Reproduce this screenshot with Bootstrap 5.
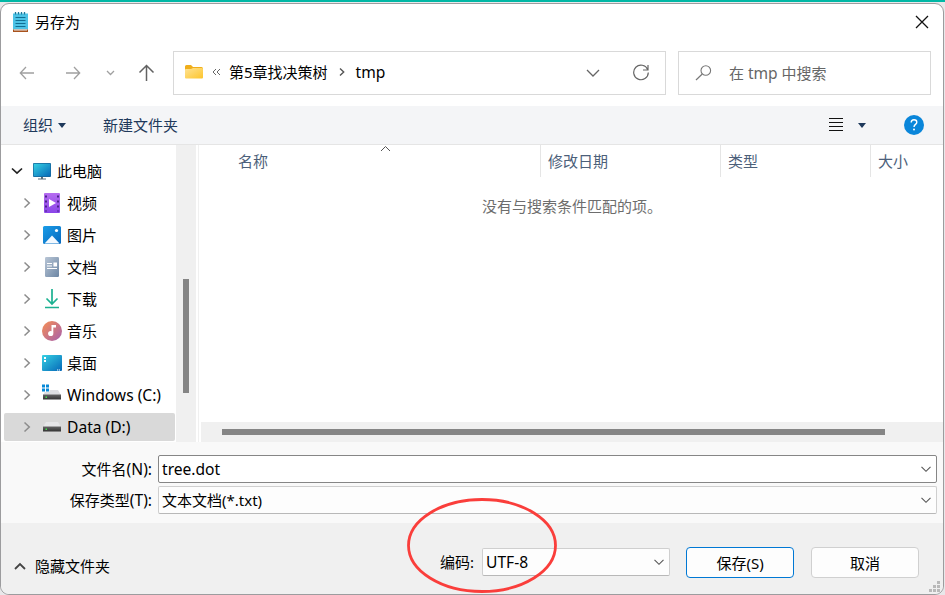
<!DOCTYPE html>
<html lang="zh-CN">
<head>
<meta charset="utf-8">
<meta name="viewport" content="width=device-width, initial-scale=1">
<title>另存为</title>
<link href="https://cdn.jsdelivr.net/npm/bootstrap@5.3.0/dist/css/bootstrap.min.css" rel="stylesheet">
<style>
body{width:945px;height:595px;background:#e8e8ea;border-top:2px solid #00b7a5;font:15px/20px "Noto Sans","Noto Sans CJK SC",sans-serif;color:#000}
svg{display:block;flex:none}
.latin{font-size:15.6px}
.dialog{width:944px;height:592px;margin-top:1px;border:1px solid #9c9c9e;border-radius:9px;background:#fff}
.titlebar{height:47px;padding:0 14px 11px 10px}
.app-name{margin-left:6px}
.addressbar{height:44px;padding-right:11px}
.arrows{width:172px;height:44px;padding-left:18px}
.arrows .forward{margin-left:30px}
.arrows .recent{margin-left:25px}
.arrows .up{margin-left:23px}
.address{width:493px;border:1px solid #d9d9d9;padding:0 15px 2px 10px}
.crumb{margin-left:8px}
.search{width:253px;margin-left:12px;border:1px solid #d9d9d9;padding-left:16px;color:#666}
.search span{margin-left:17px}
.toolbar{height:39px;margin-top:11px;background:#f4f5f7;border-bottom:1px solid #e5e5e5;padding:0 19px 0 22px;color:#1e395b}
.new-folder{margin-left:37px}
.caret{width:0;border:4px solid transparent;border-top:5px solid #1e395b;border-bottom:0}
.toolbar span+.caret{margin-left:5px}
.toolbar svg+.caret{margin-left:14px}
.help{margin-left:38px}
.browser{height:297px}
.tree{width:175px;padding:12px 0 0 3px}
.tree-item{height:28px;margin-bottom:4px;border-radius:2px;padding-left:17px;width:171px;white-space:nowrap}
.tree-item.root{padding-left:7px}
.tree-item.selected{background:#d9d9d9}
.tree-icon{width:24px;height:24px;margin:0 3px 0 7px}
.root .tree-icon{margin:0 3px 0 7px}
.vtrack{width:20px;background:#f0f0f0;padding:134px 7px 0 7px}
.vthumb{width:6px;height:114px;background:#858585}
.files{border-left:1px solid #f0f0f0;margin-left:2px}
.heads{height:32px;color:#4c607a}
.heads>div{padding:6px 0 0 7px;border-left:1px solid #e5e5e5}
.heads .name{width:341px;padding-left:39px;border:0}
.sorter{left:181px;top:0}
.date{width:180px}.kind{width:150px}
.empty{color:#6d6d6d;margin-top:19px;padding-left:2px}
.htrack{height:20px;background:#f0f0f0;margin-left:2px;padding:7px 0 0 21px}
.hthumb{width:663px;height:6px;background:#858585}
.fields{height:81px;background:#f9f9f9;padding:13px 6px 0 0}
.fields label{width:151px;text-align:right;white-space:nowrap}
.fields .picker{margin-left:6px}
.picker{height:28px;border:1px solid #cfcfcf;border-bottom-color:#b8b8b8;border-radius:2px;background:#fdfdfd;padding:0 4px 0 3px}
.picker.active-field{border-color:#868686;background:#fff;padding-bottom:1px}
.actions{height:71px;background:#f0f0f0;padding:24px 23px 0 13px;border-radius:0 0 8px 8px}
.hide-link{padding-top:9px;width:426px}
.hide-link span{margin-left:9px}
.encoding-label{margin-top:5px}
.encoding{width:188px;margin:1px 16px 0 8px}
.dlg-btn{width:108px;height:31px;padding:0;font-size:15px;line-height:20px;background:#fdfdfd;border:1px solid #d0d0d0;border-radius:4px;color:#000}
.dlg-btn.default{border-color:#0078d4;margin-right:17px}
.ring{left:406px;top:496px;pointer-events:none}
.grip{right:2px;bottom:1px}
</style>
<script src="https://cdn.jsdelivr.net/npm/bootstrap@5.3.0/dist/js/bootstrap.bundle.min.js"></script>
</head>
<body class="overflow-hidden position-relative">
<svg width="0" height="0" class="position-absolute"><defs>
<linearGradient id="blue" x2="1" y2="1"><stop stop-color="#36d1e3"/><stop offset="1" stop-color="#0668b8"/></linearGradient>
<linearGradient id="sky" x2="1" y2="1"><stop stop-color="#1a9de8"/><stop offset="1" stop-color="#0869be"/></linearGradient>
<linearGradient id="violet" x2="0" y2="1"><stop stop-color="#b66cf0"/><stop offset="1" stop-color="#8a45e8"/></linearGradient>
<linearGradient id="steel" x2="1" y2="1"><stop stop-color="#b9c6d6"/><stop offset="1" stop-color="#6c86a4"/></linearGradient>
<linearGradient id="sunset" x2="1" y2="1"><stop offset=".1" stop-color="#ef8a5c"/><stop offset="1" stop-color="#a55fae"/></linearGradient>
<linearGradient id="gold" x2="1" y2="1"><stop stop-color="#ffe394"/><stop offset="1" stop-color="#fdc52c"/></linearGradient>
<linearGradient id="disk" x2="0" y2="1"><stop stop-color="#666"/><stop offset="1" stop-color="#333"/></linearGradient>
<symbol id="right" viewBox="0 0 12 12"><path d="M3.500 1.500 8.300 6 3.500 10.500" fill="none" stroke="#8c8c8c" stroke-width="1.500"/></symbol>
<symbol id="down" viewBox="0 0 12 8"><path d="M1.500 1.800 6 6.300 10.500 1.800" fill="none" stroke="#555" stroke-width="1.100"/></symbol>
</defs></svg>

<main class="dialog overflow-hidden position-relative">
  <header class="titlebar d-flex align-items-center">
    <svg width="18" height="22" viewBox="0 0 18 22"><path d="M2 2.500h15v16H2z" fill="#4dc3e6"/><path d="M2 18.500h15V21H2z" fill="#a9521c"/><path d="M3 18.500h13v1H3z" fill="#e7eef2"/><path d="M4.500 1v2.500M7.500 1v2.500M10.500 1v2.500M13.500 1v2.500" stroke="#18799c" stroke-width="1.300"/><path d="M4.500 6.500h10M4.500 9.500h10M4.500 12.500h10M4.500 15.500h10" stroke="#126f93" stroke-width="1.100"/></svg>
    <span class="app-name">另存为</span>
    <svg class="ms-auto" width="14" height="14" viewBox="0 0 14 14"><path d="m1 1 12 12M13 1 1 13" stroke="#111" stroke-width="1.300"/></svg>
  </header>

  <nav class="addressbar d-flex">
    <div class="arrows d-flex align-items-center">
      <svg width="16" height="14" viewBox="0 0 16 14"><path d="M15 7H1.500M7 1 1.300 7 7 13" fill="none" stroke="#a0a0a0" stroke-width="1.300"/></svg>
      <svg class="forward" width="16" height="14" viewBox="0 0 16 14"><path d="M1 7h13.500M9 1l5.700 6L9 13" fill="none" stroke="#a0a0a0" stroke-width="1.300"/></svg>
      <svg class="recent" width="9" height="7" viewBox="0 0 9 7"><path d="m1 1 3.500 3.500L8 1" fill="none" stroke="#a0a0a0" stroke-width="1.300"/></svg>
      <svg class="up" width="17" height="18" viewBox="0 0 17 18"><path d="M8.500 17V1.500M1.500 8.500l7-7 7 7" fill="none" stroke="#626262" stroke-width="1.500"/></svg>
    </div>
    <div class="address d-flex align-items-center">
      <svg width="20" height="16" viewBox="0 0 20 16"><path d="M1 2.500Q1 1 2.500 1H7l2 2h8.500Q19 3 19 4.500V9H1z" fill="#f0ae1a"/><path d="M1 6q0-1 1-1h5l2-1h9q1 0 1 1v8.500q0 1-1 1H2q-1 0-1-1z" fill="url(#gold)"/></svg>
      <svg class="ms-2" width="9" height="8" viewBox="0 0 9 8"><path d="M4 1 1 4l3 3M8 1 5 4l3 3" fill="none" stroke="#666"/></svg>
      <span class="crumb">第5章找决策树</span>
      <svg class="ms-2" width="12" height="12" viewBox="0 0 12 12"><path d="M4 2.500 7.700 6 4 9.500" fill="none" stroke="#555" stroke-width="1.400"/></svg>
      <span class="crumb latin">tmp</span>
      <svg class="ms-auto me-4" width="14" height="9" viewBox="0 0 14 9"><path d="m1 2 6 6 6-6" fill="none" stroke="#666" stroke-width="1.300"/></svg>
      <svg class="ms-2" width="18" height="18" viewBox="0 0 18 18"><path d="M15.700 6.500A7.300 7.300 0 1 0 16.300 9.500M16 2v5h-5" fill="none" stroke="#666" stroke-width="1.200"/></svg>
    </div>
    <div class="search d-flex align-items-center">
      <svg width="17" height="17" viewBox="0 0 17 17"><circle cx="10.800" cy="5.500" r="4.800" fill="none" stroke="#777" stroke-width="1.100"/><path d="M7.300 9 1 15" stroke="#777" stroke-width="1.200"/></svg>
      <span>在 <span class="latin m-0">tmp</span> 中搜索</span>
    </div>
  </nav>

  <section class="toolbar d-flex align-items-center">
    <span>组织</span><i class="caret"></i>
    <span class="new-folder">新建文件夹</span>
    <svg class="ms-auto" width="16" height="14" viewBox="0 0 16 14"><path d="M1 .5h14M1 4.500h14M1 8.500h14M1 12.500h14" stroke="#111"/></svg>
    <i class="caret"></i>
    <svg class="help" width="20" height="20" viewBox="0 0 20 20"><circle cx="10" cy="10" r="10" fill="#0a86da"/><path d="M7.200 7.500Q7.200 4.700 10 4.700T12.800 7.200C12.800 9.500 10 9.200 10 12" fill="none" stroke="#fff" stroke-width="1.400"/><circle cx="10" cy="14.600" r="1" fill="#fff"/></svg>
  </section>

  <section class="browser d-flex">
    <aside class="tree">
      <div class="tree-item root d-flex align-items-center">
        <svg width="12" height="8" viewBox="0 0 12 8"><path d="m1 1.500 5 4.700 5-4.700" fill="none" stroke="#222" stroke-width="1.700"/></svg>
        <svg class="tree-icon" viewBox="0 0 24 24"><rect x="3" y="4" width="18" height="14" rx="1" fill="#16659a"/><path d="M3.700 4.700h16.600v12.600H3.700z" fill="url(#blue)"/><path d="M11 18h2v1.500h3v1H8v-1h3z" fill="#5b6d7a"/></svg><span>此电脑</span></div>
      <div class="tree-item d-flex align-items-center"><svg width="12" height="12"><use href="#right"/></svg>
        <svg class="tree-icon" viewBox="0 0 24 24"><rect x="4" y="2" width="16" height="20" rx="1" fill="url(#violet)"/><path d="M6 4.500v16M18 4.500v16" stroke="#4a238c" stroke-width="2" stroke-dasharray="2 3"/><path d="m9 8 7 4-7 4z" fill="#fff"/></svg><span>视频</span></div>
      <div class="tree-item d-flex align-items-center"><svg width="12" height="12"><use href="#right"/></svg>
        <svg class="tree-icon" viewBox="0 0 24 24"><rect x="3" y="3" width="18" height="18" rx="1.500" fill="url(#sky)"/><path d="m4.500 20.500 7.500-8 7.500 8z" fill="#f3f9ff"/><circle cx="16.500" cy="7.500" r="1.600" fill="#fff"/></svg><span>图片</span></div>
      <div class="tree-item d-flex align-items-center"><svg width="12" height="12"><use href="#right"/></svg>
        <svg class="tree-icon" viewBox="0 0 24 24"><rect x="5" y="2" width="14" height="20" rx="1.200" fill="url(#steel)"/><path d="M7 8.500h5M7 11h5M7 13.500h10M14 8v3h2.500V8z" stroke="#fff" stroke-width="1.100" fill="#fff"/></svg><span>文档</span></div>
      <div class="tree-item d-flex align-items-center"><svg width="12" height="12"><use href="#right"/></svg>
        <svg class="tree-icon" viewBox="0 0 24 24"><path d="M12 2v14.500M6.500 11.500l5.500 5.500 5.500-5.500M5 20.500h14" fill="none" stroke="#1bb191" stroke-width="1.700"/></svg><span>下载</span></div>
      <div class="tree-item d-flex align-items-center"><svg width="12" height="12"><use href="#right"/></svg>
        <svg class="tree-icon" viewBox="0 0 24 24"><circle cx="12" cy="12" r="10" fill="url(#sunset)"/><path d="M11.500 6h4.500v2.500h-2.700V14h-1.800z" fill="#fff"/><circle cx="10.700" cy="14.500" r="2.600" fill="#fff"/></svg><span>音乐</span></div>
      <div class="tree-item d-flex align-items-center"><svg width="12" height="12"><use href="#right"/></svg>
        <svg class="tree-icon" viewBox="0 0 24 24"><rect x="2" y="4" width="20" height="16" rx="1" fill="url(#blue)"/><path d="M4 6h2v2H4zM4 9h2v2H4zM17 18.500h1.300v1H17zM19 18.500h1v1h-1z" fill="#fff"/></svg><span>桌面</span></div>
      <div class="tree-item d-flex align-items-center"><svg width="12" height="12"><use href="#right"/></svg>
        <svg class="tree-icon" viewBox="0 0 24 24"><path d="m3 12 3-5h12l3 5z" fill="#dedfe2"/><path d="M3 11.500h18v5H3z" fill="url(#disk)"/><path d="M1.500 1h8v8h-8z" fill="#fff"/><path d="M2 1.500h3v3H2zM6 1.500h3v3H6zM2 5.500h3v3H2zM6 5.500h3v3H6z" fill="#0889d8"/><path d="M5.500 13.500h1.500v1.500H5.500z" fill="#41df4c"/></svg><span class="latin">Windows (C:)</span></div>
      <div class="tree-item selected d-flex align-items-center"><svg width="12" height="12"><use href="#right"/></svg>
        <svg class="tree-icon" viewBox="0 0 24 24"><path d="m3 12 3-5h12l3 5z" fill="#e6e6e8"/><path d="M3 11.500h18v5H3z" fill="url(#disk)"/><path d="M5.500 13.500h1.500v1.500H5.500z" fill="#41df4c"/></svg><span class="latin">Data (D:)</span></div>
    </aside>
    <div class="vtrack"><div class="vthumb"></div></div>
    <div class="files flex-grow-1 d-flex flex-column">
      <div class="heads d-flex position-relative">
        <div class="name">名称</div><div class="date">修改日期</div><div class="kind">类型</div><div>大小</div>
        <svg class="sorter position-absolute" width="11" height="7" viewBox="0 0 11 7"><path d="m1 6 4.500-4.500L10 6" fill="none" stroke="#555"/></svg>
      </div>
      <div class="empty text-center">没有与搜索条件匹配的项。</div>
      <div class="htrack mt-auto"><div class="hthumb"></div></div>
    </div>
  </section>

  <section class="fields d-flex flex-column">
    <div class="d-flex align-items-center"><label>文件名<span class="latin">(N):</span></label>
      <div class="picker active-field d-flex align-items-center flex-grow-1"><span class="latin">tree.dot</span><svg class="ms-auto" width="12" height="8"><use href="#down"/></svg></div></div>
    <div class="d-flex align-items-center" style="margin-top:3px"><label>保存类型<span class="latin">(T):</span></label>
      <div class="picker d-flex align-items-center flex-grow-1"><span>文本文档(*.txt)</span><svg class="ms-auto" width="12" height="8"><use href="#down"/></svg></div></div>
  </section>

  <footer class="actions d-flex align-items-start">
    <div class="hide-link d-flex align-items-center"><svg width="12" height="8" viewBox="0 0 12 8"><path d="m1 7 5-5 5 5" fill="none" stroke="#444" stroke-width="1.800"/></svg><span>隐藏文件夹</span></div>
    <label class="encoding-label">编码:</label>
    <div class="picker encoding d-flex align-items-center"><span class="latin">UTF-8</span><svg class="ms-auto" width="12" height="8"><use href="#down"/></svg></div>
    <button class="btn dlg-btn default">保存(S)</button>
    <button class="btn dlg-btn">取消</button>
  </footer>
  <svg class="grip position-absolute" width="12" height="12" viewBox="0 0 12 12"><path d="M8 0h3v3H8zM4 4h3v3H4zM8 4h3v3H8zM0 8h3v3H0zM4 8h3v3H4zM8 8h3v3H8z" fill="#b9b9b9"/></svg>
</main>
<svg class="ring position-absolute" width="152" height="98" viewBox="0 0 152 98"><ellipse cx="76" cy="47.500" rx="73.500" ry="46" fill="none" stroke="#fa3e3b" stroke-width="2.800"/></svg>
</body>
</html>
